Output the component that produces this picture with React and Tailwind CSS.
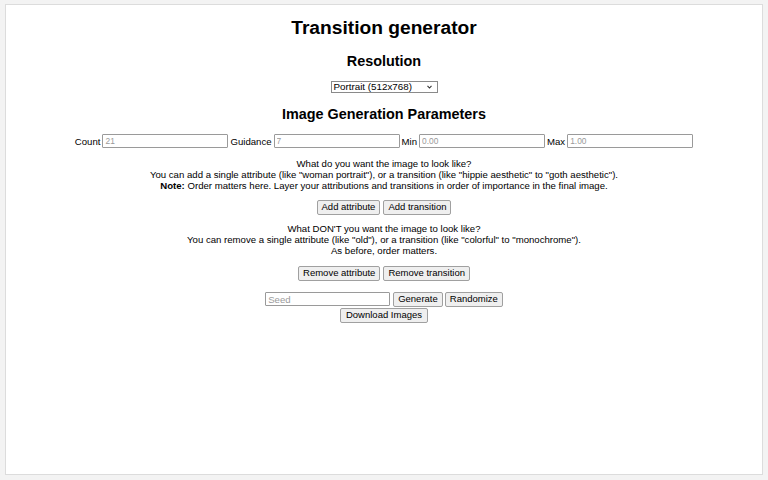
import React from "react";

const btn =
  "inline-block align-middle bg-[#efefef] border border-[#a0a0a0] rounded-[2px] px-[4px] h-[15px] leading-[12px] text-[9.5px] text-black";
const inp =
  "inline-block align-middle bg-white border border-[#9a9a9a] rounded-[1px] h-[14px] px-[2px] text-[8.4px] text-black placeholder:text-[#9a9a9a] outline-none";

export default function App() {
  return (
    <div className="w-[768px] h-[480px] bg-[#f3f3f3] pt-[4px] px-[5px] font-['Liberation_Sans',Arial,sans-serif] text-black">
      <div className="h-[471px] bg-white border border-[#dcdcdc] text-center text-[9.6px] leading-[11px]">
        <h1 className="text-[19.2px] leading-[22px] font-bold mt-[12px]">Transition generator</h1>
        <h2 className="text-[14.4px] leading-[16.5px] font-bold mt-[13.5px]">Resolution</h2>
        <div className="mt-[11.5px] h-[13px] flex justify-center">
          <div className="relative w-[107px] h-[12px] border border-[#8a8a8a] bg-white flex items-center text-[9.8px] leading-[10px] pl-[2px]">
            <span>Portrait (512x768)</span>
            <svg className="absolute right-[5px] top-[3.5px]" width="5" height="4" viewBox="0 0 5 4">
              <path d="M0.5 0.8 L2.5 3 L4.5 0.8" fill="none" stroke="#333" strokeWidth="1.1" />
            </svg>
          </div>
        </div>
        <h2 className="text-[14.4px] leading-[16.5px] font-bold mt-[12px]">Image Generation Parameters</h2>
        <div className="mt-[12px] h-[14px] flex justify-center items-center whitespace-nowrap">
          <span>Count</span>
          <input className={inp + " w-[126px] ml-[2px] mr-[2px]"} placeholder="21" />
          <span>Guidance</span>
          <input className={inp + " w-[126px] ml-[2px] mr-[2px]"} placeholder="7" />
          <span>Min</span>
          <input className={inp + " w-[126px] ml-[2px] mr-[2px]"} placeholder="0.00" />
          <span>Max</span>
          <input className={inp + " w-[126px] ml-[2px]"} placeholder="1.00" />
        </div>
        <p className="mt-[9.5px]">
          What do you want the image to look like?
          <br />
          You can add a single attribute (like "woman portrait"), or a transition (like "hippie aesthetic" to "goth aesthetic").
          <br />
          <b>Note:</b> Order matters here. Layer your attributions and transitions in order of importance in the final image.
        </p>
        <div className="mt-[9px] flex justify-center gap-[3px]">
          <button className={btn}>Add attribute</button>
          <button className={btn}>Add transition</button>
        </div>
        <p className="mt-[8.5px]">
          What DON'T you want the image to look like?
          <br />
          You can remove a single attribute (like "old"), or a transition (like "colorful" to "monochrome").
          <br />
          As before, order matters.
        </p>
        <div className="mt-[9.5px] flex justify-center gap-[3px]">
          <button className={btn}>Remove attribute</button>
          <button className={btn}>Remove transition</button>
        </div>
        <div className="mt-[11px] flex justify-center items-center gap-[2px]">
          <input className={inp + " w-[125px] mr-[1px] text-[9.6px]"} placeholder="Seed" />
          <button className={btn}>Generate</button>
          <button className={btn}>Randomize</button>
        </div>
        <div className="mt-[1px] flex justify-center">
          <button className={btn + " px-[5px]"}>Download Images</button>
        </div>
      </div>
    </div>
  );
}
